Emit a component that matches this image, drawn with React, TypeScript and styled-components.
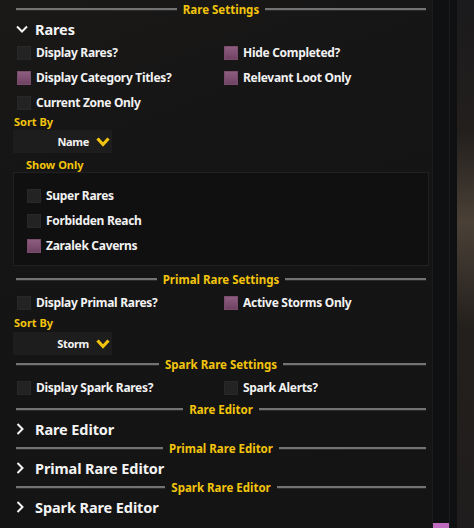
import React from 'react';
import styled, { createGlobalStyle } from 'styled-components';

const GlobalStyle = createGlobalStyle`
  html, body {
    margin: 0;
    padding: 0;
    background: #121111;
  }
  body {
    font-family: 'Noto Sans', 'DejaVu Sans', sans-serif;
  }
`;

const Page = styled.div`
  display: flex;
  width: 474px;
  height: 528px;
  overflow: hidden;
`;

const Panel = styled.div`
  width: 432px;
  box-sizing: border-box;
  padding: 0 3px 0 13px;
  background: linear-gradient(160deg, #1a1918 0%, #161515 30%, #151414 100%);
  display: flex;
  flex-direction: column;
`;

const ScrollTrack = styled.div`
  width: 25px;
  box-sizing: border-box;
  background: #0f1012;
  border-left: 1px solid #1c1c1e;
  display: flex;
`;

const ScrollLane = styled.div`
  width: 16px;
  height: 100%;
  border-right: 1px solid #1a1b1d;
  display: flex;
  align-items: flex-end;
`;

const ScrollThumb = styled.div`
  width: 16px;
  height: 5px;
  background: #bf6cc0;
`;

const Backdrop = styled.div`
  flex: 1;
  background: linear-gradient(
    180deg,
    #1b1a1c 0%,
    #221f1d 25%,
    #4a4036 42%,
    #3b342d 50%,
    #231f1c 62%,
    #1f1d1d 100%
  );
`;

const Heading = styled.div<{ $mt?: number }>`
  display: flex;
  align-items: center;
  gap: 6px;
  height: 18px;
  margin-top: ${p => p.$mt ?? 0}px;
  padding: 0 3px;
  color: #f2c40d;
  font-size: 11.5px;
  font-weight: 700;
  white-space: nowrap;

  &::before,
  &::after {
    content: '';
    flex: 1;
    height: 2px;
    background: #737373;
    border-bottom: 1px solid #2a2a2a;
  }
`;

const Collapsible = styled.div<{ $mt?: number }>`
  display: flex;
  align-items: center;
  height: 20px;
  margin-top: ${p => p.$mt ?? 0}px;
  padding-left: 3px;
  color: #f4f4f4;
  font-size: 14.5px;
  font-weight: 700;
  letter-spacing: -0.1px;
`;

const ChevronBox = styled.span`
  width: 19px;
  display: flex;
  align-items: center;
  justify-content: flex-start;
`;

const CheckGrid = styled.div<{ $indent?: number; $mt?: number }>`
  display: grid;
  grid-template-columns: 207px 207px;
  margin-top: ${p => p.$mt ?? 0}px;
  padding-left: ${p => p.$indent ?? 4}px;
`;

const CheckRow = styled.label`
  display: flex;
  align-items: center;
  gap: 5px;
  height: 25px;
  color: #f2f2f2;
  font-size: 12px;
  font-weight: 700;
  letter-spacing: -0.3px;
  white-space: nowrap;
`;

const Box = styled.span<{ $checked?: boolean }>`
  width: 14px;
  height: 14px;
  box-sizing: border-box;
  flex-shrink: 0;
  background: ${p => (p.$checked ? 'linear-gradient(180deg, #8e5d80, #6f4364)' : '#242323')};
  border: 1px solid ${p => (p.$checked ? '#7a4c6c' : '#292828')};
`;

const SubLabel = styled.div<{ $indent?: number; $mt?: number }>`
  height: 14px;
  line-height: 14px;
  margin-top: ${p => p.$mt ?? 0}px;
  padding-left: ${p => p.$indent ?? 1}px;
  color: #f2c40d;
  font-size: 11px;
  font-weight: 700;
`;

const Dropdown = styled.div<{ $mt?: number }>`
  width: 99px;
  height: 23px;
  margin-top: ${p => p.$mt ?? 0}px;
  box-sizing: border-box;
  background: #1e1d1d;
  display: flex;
  align-items: center;
  justify-content: flex-end;
  gap: 7px;
  padding-right: 2px;
  color: #f2f2f2;
  font-size: 11px;
  font-weight: 700;
  letter-spacing: -0.3px;
`;

const InsetBox = styled.div`
  height: 94px;
  box-sizing: border-box;
  background: #111010;
  border: 1px solid #222121;
  padding: 10px 0 0 13px;
`;

const YellowChevron = () => (
  <svg width="14" height="10" viewBox="0 0 14 10">
    <path d="M1.5 1.5 L7 7.5 L12.5 1.5" fill="none" stroke="#f2c40d" strokeWidth="3.2" />
  </svg>
);

const DownChevron = () => (
  <svg width="12" height="8" viewBox="0 0 12 8">
    <path d="M1 1.5 L6 6.5 L11 1.5" fill="none" stroke="#f4f4f4" strokeWidth="2" />
  </svg>
);

const RightChevron = () => (
  <svg width="8" height="12" viewBox="0 0 8 12">
    <path d="M1.5 1 L6.5 6 L1.5 11" fill="none" stroke="#f4f4f4" strokeWidth="2" />
  </svg>
);

type Check = { label: string; checked?: boolean };

const Checks: React.FC<{ items: Check[]; mt?: number }> = ({ items, mt }) => (
  <CheckGrid $mt={mt}>
    {items.map(item => (
      <CheckRow key={item.label}>
        <Box $checked={item.checked} />
        {item.label}
      </CheckRow>
    ))}
  </CheckGrid>
);

const Editor: React.FC<{ title: string }> = ({ title }) => (
  <>
    <Heading>{title}</Heading>
    <Collapsible $mt={1}>
      <ChevronBox>
        <RightChevron />
      </ChevronBox>
      {title}
    </Collapsible>
  </>
);

export default function App() {
  return (
    <Page>
      <GlobalStyle />
      <Panel>
        <Heading>Rare Settings</Heading>
        <Collapsible $mt={1}>
          <ChevronBox>
            <DownChevron />
          </ChevronBox>
          Rares
        </Collapsible>
        <Checks
          mt={1}
          items={[
            { label: 'Display Rares?' },
            { label: 'Hide Completed?', checked: true },
            { label: 'Display Category Titles?', checked: true },
            { label: 'Relevant Loot Only', checked: true },
            { label: 'Current Zone Only' },
          ]}
        />
        <SubLabel>Sort By</SubLabel>
        <Dropdown $mt={1}>
          Name
          <YellowChevron />
        </Dropdown>
        <SubLabel $indent={13} $mt={5}>Show Only</SubLabel>
        <InsetBox>
          <CheckGrid $indent={0}>
            <CheckRow>
              <Box />
              Super Rares
            </CheckRow>
          </CheckGrid>
          <CheckGrid $indent={0}>
            <CheckRow>
              <Box />
              Forbidden Reach
            </CheckRow>
          </CheckGrid>
          <CheckGrid $indent={0}>
            <CheckRow>
              <Box $checked />
              Zaralek Caverns
            </CheckRow>
          </CheckGrid>
        </InsetBox>

        <Heading $mt={4}>Primal Rare Settings</Heading>
        <Checks
          mt={2}
          items={[
            { label: 'Display Primal Rares?' },
            { label: 'Active Storms Only', checked: true },
          ]}
        />
        <SubLabel $mt={1}>Sort By</SubLabel>
        <Dropdown $mt={2}>
          Storm
          <YellowChevron />
        </Dropdown>

        <Heading>Spark Rare Settings</Heading>
        <Checks
          mt={2}
          items={[
            { label: 'Display Spark Rares?' },
            { label: 'Spark Alerts?' },
          ]}
        />

        <Editor title="Rare Editor" />
        <Editor title="Primal Rare Editor" />
        <Editor title="Spark Rare Editor" />
      </Panel>
      <ScrollTrack>
        <ScrollLane>
          <ScrollThumb />
        </ScrollLane>
      </ScrollTrack>
      <Backdrop />
    </Page>
  );
}
